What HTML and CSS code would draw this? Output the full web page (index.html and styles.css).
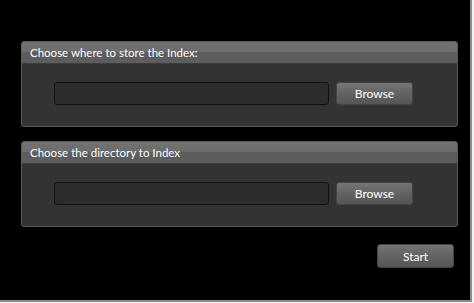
FILE: index.html
```html
<!DOCTYPE html>
<html>
<head>
<meta charset="utf-8">
<link rel="stylesheet" href="styles.css">
</head>
<body>
<div class="app">
  <section class="panel">
    <div class="panel-head">Choose where to store the Index:</div>
    <div class="panel-body">
      <div class="field"></div>
      <button class="btn browse">Browse</button>
    </div>
  </section>
  <section class="panel">
    <div class="panel-head">Choose the directory to Index</div>
    <div class="panel-body">
      <div class="field"></div>
      <button class="btn browse">Browse</button>
    </div>
  </section>
  <div class="actions">
    <button class="btn start">Start</button>
  </div>
</div>
</body>
</html>
```
FILE: styles.css
```css
html, body {
  margin: 0;
  padding: 0;
  background: #f2f2f2;
}
body {
  font-family: Lato, "Liberation Sans", Arial, sans-serif;
}
.app {
  background: #000;
  border-right: 2px solid #8c8c8c;
  border-bottom: 2px solid #8c8c8c;
  padding: 41px 0 0 21px;
  box-sizing: content-box;
  width: 449px;
  height: 259px;
  display: flex;
  flex-direction: column;
  gap: 14px;
}
.panel {
  width: 437px;
  box-sizing: border-box;
  border: 1px solid #5a5a5a;
  border-radius: 3px;
  background: #333;
  overflow: hidden;
}
.panel-head {
  height: 22px;
  box-sizing: border-box;
  padding: 3px 0 0 8px;
  color: #fff;
  font-size: 11.5px;
  line-height: 15px;
  background: linear-gradient(#727272 0, #6c6c6c 10px, #5d5d5d 10px, #5d5d5d 100%);
  border-bottom: 1px solid #3c3c3c;
}
.panel-body {
  height: 62px;
  box-sizing: border-box;
  padding: 18px 0 0 32px;
  display: flex;
  align-items: flex-start;
  gap: 7px;
}
.field {
  width: 275px;
  height: 23px;
  box-sizing: border-box;
  border: 1px solid #111;
  border-radius: 3px;
  background: #2c2c2c;
}
.btn {
  width: 77px;
  height: 23px;
  box-sizing: border-box;
  border: 1px solid #444;
  border-radius: 3px;
  background: linear-gradient(#757575 0, #646464 45%, #555 100%);
  color: #fff;
  font-family: Lato, "Liberation Sans", Arial, sans-serif;
  font-size: 12px;
  padding: 0;
}
.actions {
  display: flex;
  justify-content: flex-end;
  width: 433px;
  padding-top: 3px;
}
.start {
  height: 24px;
}
```
